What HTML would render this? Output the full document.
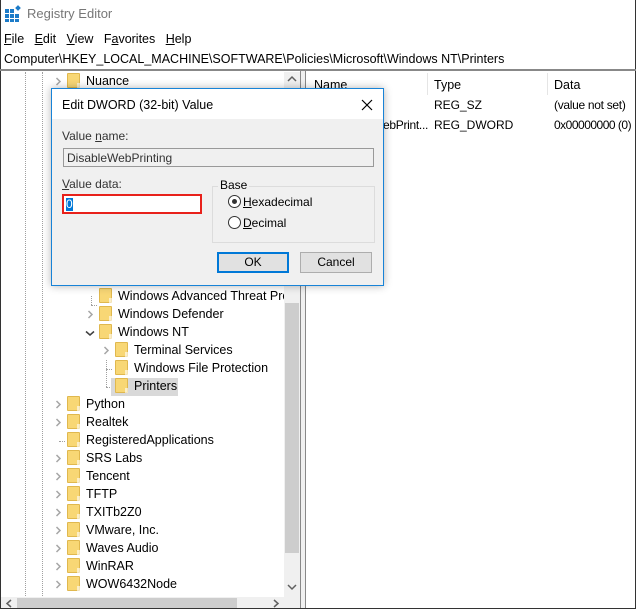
<!DOCTYPE html>
<html><head><style>
*{margin:0;padding:0;box-sizing:border-box}
body{width:636px;height:609px;overflow:hidden;background:#fff;font-family:"Liberation Sans",sans-serif;font-size:12px;color:#000;position:relative}
.a{position:absolute;white-space:nowrap}
.fold{position:absolute;width:13px;height:15px;background:#f8d775;border:1px solid #e0b84e;border-radius:1px}
.fold:after{content:"";position:absolute;right:-1px;bottom:-1px;width:3px;height:5px;background:#fff;opacity:.6}
.chev{position:absolute}
.dotv{position:absolute;border-left:1px dotted #a0a0a0}
.doth{position:absolute;border-top:1px dotted #a0a0a0}
u{text-decoration:underline}
</style></head><body>
<div class="a" style="left:0;top:0;width:636px;height:609px;border:1px solid #333;border-top:none"></div>
<svg class="a" style="left:5px;top:5px" width="17" height="17" viewBox="0 0 17 17"><g fill="#1c7bc8"><rect x="0" y="4" width="4" height="4"/><rect x="5" y="4" width="4" height="4"/><rect x="0" y="9" width="4" height="4"/><rect x="5" y="9" width="4" height="4"/><rect x="10" y="9" width="4" height="4"/><rect x="0" y="14" width="4" height="3"/><rect x="5" y="14" width="4" height="3"/><rect x="10" y="14" width="4" height="3"/><rect x="11" y="1" width="4" height="4" transform="rotate(45 13 3)"/></g></svg>
<div class="a" style="left:27px;top:6px;font-size:13px;color:#777">Registry Editor</div>
<div class="a" style="left:4px;top:32px;font-size:12.5px"><u>F</u>ile &nbsp;&nbsp;<u>E</u>dit &nbsp;&nbsp;<u>V</u>iew &nbsp;&nbsp;F<u>a</u>vorites &nbsp;&nbsp;<u>H</u>elp</div>
<div class="a" style="left:4px;top:52px;font-size:12.5px">Computer\HKEY_LOCAL_MACHINE\SOFTWARE\Policies\Microsoft\Windows NT\Printers</div>
<div class="a" style="left:0;top:69px;width:636px;height:2px;background:#888"></div>
<div class="dotv" style="left:25px;top:72px;height:524px"></div>
<div class="dotv" style="left:42px;top:72px;height:524px"></div>
<div class="dotv" style="left:91px;top:296px;height:9px"></div>
<div class="doth" style="left:91px;top:305px;width:6px"></div>
<div class="dotv" style="left:106px;top:360px;height:27px"></div>
<div class="doth" style="left:106px;top:369px;width:6px"></div>
<div class="doth" style="left:106px;top:387px;width:6px"></div>
<div class="doth" style="left:59px;top:441px;width:6px"></div>
<div class="a" style="left:111px;top:378px;width:67px;height:18px;background:#d9d9d9"></div>
<div id="tree"></div>
<div class="a" style="left:284px;top:72px;width:16px;height:525px;background:#f0f0f0"></div>
<div class="a" style="left:285px;top:303px;width:14px;height:250px;background:#cdcdcd"></div>
<svg class="a" style="left:287px;top:75px" width="10" height="8"><path d="M1 6L5 2L9 6" stroke="#606060" stroke-width="1.5" fill="none"/></svg>
<svg class="a" style="left:287px;top:583px" width="10" height="8"><path d="M1 2L5 6L9 2" stroke="#606060" stroke-width="1.5" fill="none"/></svg>
<div class="a" style="left:1px;top:597px;width:299px;height:11px;background:#f0f0f0"></div>
<div class="a" style="left:17px;top:598px;width:220px;height:10px;background:#cdcdcd"></div>
<svg class="a" style="left:5px;top:599px" width="8" height="9"><path d="M6 1L2 4.5L6 8" stroke="#606060" stroke-width="1.5" fill="none"/></svg>
<svg class="a" style="left:272px;top:599px" width="8" height="9"><path d="M2 1L6 4.5L2 8" stroke="#606060" stroke-width="1.5" fill="none"/></svg>
<div class="a" style="left:300px;top:71px;width:6px;height:537px;background:#f0f0f0;border-left:1px solid #888;border-right:1px solid #888"></div>
<div class="a" style="left:314px;top:78px;font-size:12.5px">Name</div>
<div class="a" style="left:434px;top:78px;font-size:12.5px">Type</div>
<div class="a" style="left:554px;top:78px;font-size:12.5px">Data</div>
<div class="a" style="left:427px;top:73px;width:1px;height:22px;background:#e5e5e5"></div>
<div class="a" style="left:547px;top:73px;width:1px;height:22px;background:#e5e5e5"></div>
<div class="a" style="left:434px;top:98px">REG_SZ</div>
<div class="a" style="left:554px;top:98px;letter-spacing:-.3px">(value not set)</div>
<div class="a" style="left:383px;top:118px;letter-spacing:-.3px">ebPrint...</div>
<div class="a" style="left:434px;top:118px">REG_DWORD</div>
<div class="a" style="left:554px;top:118px;letter-spacing:-.5px">0x00000000 (0)</div>
<div class="a" style="left:51px;top:88px;width:333px;height:198px;background:#f0f0f0;border:1px solid #1883d7;box-shadow:0 0 8px rgba(0,0,0,.3)">
 <div class="a" style="left:0;top:0;width:331px;height:30px;background:#fff"></div>
 <div class="a" style="left:10px;top:9px;font-size:12.5px">Edit DWORD (32-bit) Value</div>
 <svg class="a" style="left:309px;top:10px" width="12" height="12"><path d="M1 1L11 11M11 1L1 11" stroke="#000" stroke-width="1.2"/></svg>
 <div class="a" style="left:10px;top:40px;color:#333">Value <u>n</u>ame:</div>
 <div class="a" style="left:11px;top:59px;width:311px;height:19px;border:1px solid #999;background:#f0f0f0;padding:2px 3px;color:#333">DisableWebPrinting</div>
 <div class="a" style="left:10px;top:88px;color:#333"><u>V</u>alue data:</div>
 <div class="a" style="left:10px;top:105px;width:140px;height:20px;border:2px solid #e8211b;background:#fff"></div>
 <div class="a" style="left:14px;top:109px;width:7px;height:13px;background:#0078d7;color:#fff;font-size:12px;line-height:13px">0</div>
 <div class="a" style="left:160px;top:97px;width:163px;height:57px;border:1px solid #dcdcdc"></div>
 <div class="a" style="left:166px;top:89px;background:#f0f0f0;padding:0 2px">Base</div>
 <div class="a" style="left:176px;top:106px;width:13px;height:13px;border:1px solid #333;border-radius:50%;background:#fff"></div>
 <div class="a" style="left:180px;top:110px;width:5px;height:5px;border-radius:50%;background:#333"></div>
 <div class="a" style="left:191px;top:106px"><u>H</u>exadecimal</div>
 <div class="a" style="left:176px;top:127px;width:13px;height:13px;border:1px solid #333;border-radius:50%;background:#fff"></div>
 <div class="a" style="left:191px;top:127px"><u>D</u>ecimal</div>
 <div class="a" style="left:165px;top:163px;width:72px;height:21px;border:2px solid #0078d7;background:#e1e1e1;text-align:center;line-height:17px">OK</div>
 <div class="a" style="left:248px;top:163px;width:72px;height:21px;border:1px solid #adadad;background:#e1e1e1;text-align:center;line-height:19px">Cancel</div>
</div>
<script>
var items=[
[81,57,67,86,"Nuance",1],
[296,0,99,118,"Windows Advanced Threat Prot",0],
[314,89,99,118,"Windows Defender",1],
[332,89,99,118,"Windows NT",2],
[350,105,115,134,"Terminal Services",1],
[368,0,115,134,"Windows File Protection",0],
[386,0,115,134,"Printers",0],
[404,57,67,86,"Python",1],[422,57,67,86,"Realtek",1],[440,0,67,86,"RegisteredApplications",0],
[458,57,67,86,"SRS Labs",1],[476,57,67,86,"Tencent",1],[494,57,67,86,"TFTP",1],[512,57,67,86,"TXITb2Z0",1],
[530,57,67,86,"VMware, Inc.",1],[548,57,67,86,"Waves Audio",1],[566,57,67,86,"WinRAR",1],[584,57,67,86,"WOW6432Node",1]];
var h="";
items.forEach(function(i){
 if(i[5]==1)h+='<svg class="chev" style="left:'+(i[1]-2)+'px;top:'+(i[0]-4)+'px" width="7" height="9"><path d="M1.5 1L5 4.5L1.5 8" stroke="#a6a6a6" stroke-width="1.5" fill="none"/></svg>';
 if(i[5]==2)h+='<svg class="chev" style="left:'+(i[1]-4)+'px;top:'+(i[0]-2)+'px" width="10" height="7"><path d="M1 1.5L5 5L9 1.5" stroke="#404040" stroke-width="1.5" fill="none"/></svg>';
 h+='<div class="fold" style="left:'+i[2]+'px;top:'+(i[0]-8)+'px"></div>';
 h+='<div class="a" style="left:'+i[3]+'px;top:'+(i[0]-7)+'px;font-size:12.5px;width:'+(284-i[3])+'px;overflow:hidden">'+i[4]+'</div>';
});
document.getElementById("tree").innerHTML=h;
</script>
</body></html>
